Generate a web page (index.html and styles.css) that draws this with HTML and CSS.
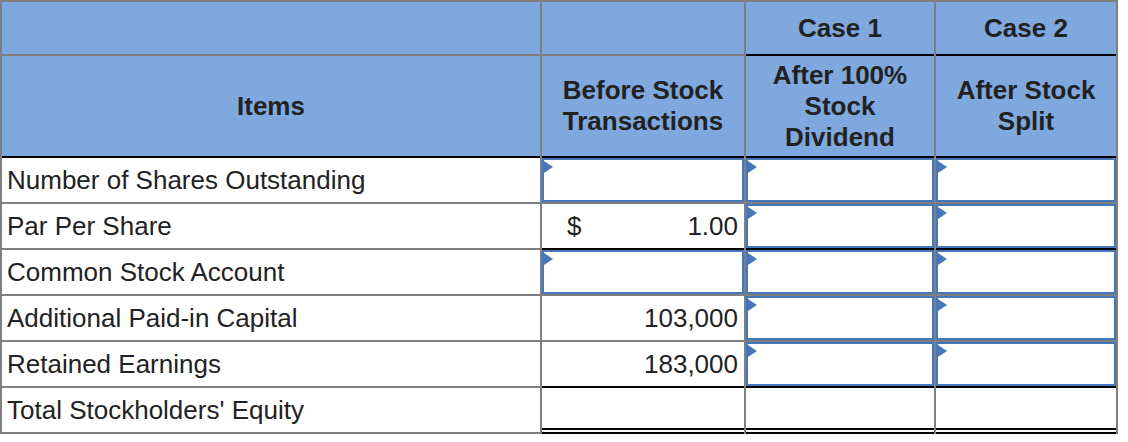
FILE: index.html
```html
<!DOCTYPE html>
<html>
<head>
<meta charset="utf-8">
<link rel="stylesheet" href="styles.css">
</head>
<body>
<div class="sheet">
  <div class="c hd"></div>
  <div class="c hd"></div>
  <div class="c hd">Case 1</div>
  <div class="c hd">Case 2</div>

  <div class="c hd">Items</div>
  <div class="c hd">Before Stock<br>Transactions</div>
  <div class="c hd under-black">After 100%<br>Stock<br>Dividend</div>
  <div class="c hd under-black">After Stock<br>Split</div>

  <div class="c lbl top-black">Number of Shares Outstanding</div>
  <div class="c inp top-black"></div>
  <div class="c inp top-black"></div>
  <div class="c inp top-black"></div>

  <div class="c lbl">Par Per Share</div>
  <div class="c num acct"><span class="cur">$</span><span>1.00</span></div>
  <div class="c inp"></div>
  <div class="c inp"></div>

  <div class="c lbl">Common Stock Account</div>
  <div class="c inp top-black"></div>
  <div class="c inp top-black"></div>
  <div class="c inp top-black"></div>

  <div class="c lbl">Additional Paid-in Capital</div>
  <div class="c num">103,000</div>
  <div class="c inp"></div>
  <div class="c inp"></div>

  <div class="c lbl">Retained Earnings</div>
  <div class="c num">183,000</div>
  <div class="c inp"></div>
  <div class="c inp"></div>

  <div class="c lbl">Total Stockholders' Equity</div>
  <div class="c total"></div>
  <div class="c total"></div>
  <div class="c total"></div>
</div>
</body>
</html>
```

FILE: styles.css
```css
html, body {
  margin: 0;
  padding: 0;
  background: #ffffff;
}

.sheet {
  display: grid;
  grid-template-columns: 538px 202px 188px 180px;
  grid-template-rows: 52px 100px repeat(6, 44px);
  gap: 2px;
  padding: 2px;
  width: max-content;
  background: #7f7f7f;
  font-family: "Liberation Sans", Arial, sans-serif;
  color: #222222;
}

.c {
  background: #ffffff;
  position: relative;
  box-sizing: border-box;
  font-size: 26px;
  display: flex;
  align-items: center;
}

.hd {
  background: #7fa9de;
  font-weight: bold;
  justify-content: center;
  text-align: center;
  line-height: 31px;
}

.under-black {
  box-shadow: 0 -2px 0 #000000;
}

.lbl {
  padding-left: 5px;
  white-space: nowrap;
}

.num {
  justify-content: flex-end;
  padding-right: 6px;
}

.acct {
  justify-content: space-between;
  padding-left: 25px;
}

.top-black {
  box-shadow: 0 -2px 0 #000000;
}

.inp {
  border: 2px solid #4677bb;
}

.inp::before {
  content: "";
  position: absolute;
  left: 0;
  top: 1px;
  width: 0;
  height: 0;
  border-top: 6px solid transparent;
  border-bottom: 6px solid transparent;
  border-left: 9px solid #4677bb;
}

.total {
  box-shadow: inset 0 -2px 0 #ffffff, inset 0 -4px 0 #000000, 0 -2px 0 #000000, 0 2px 0 #000000;
}
```
